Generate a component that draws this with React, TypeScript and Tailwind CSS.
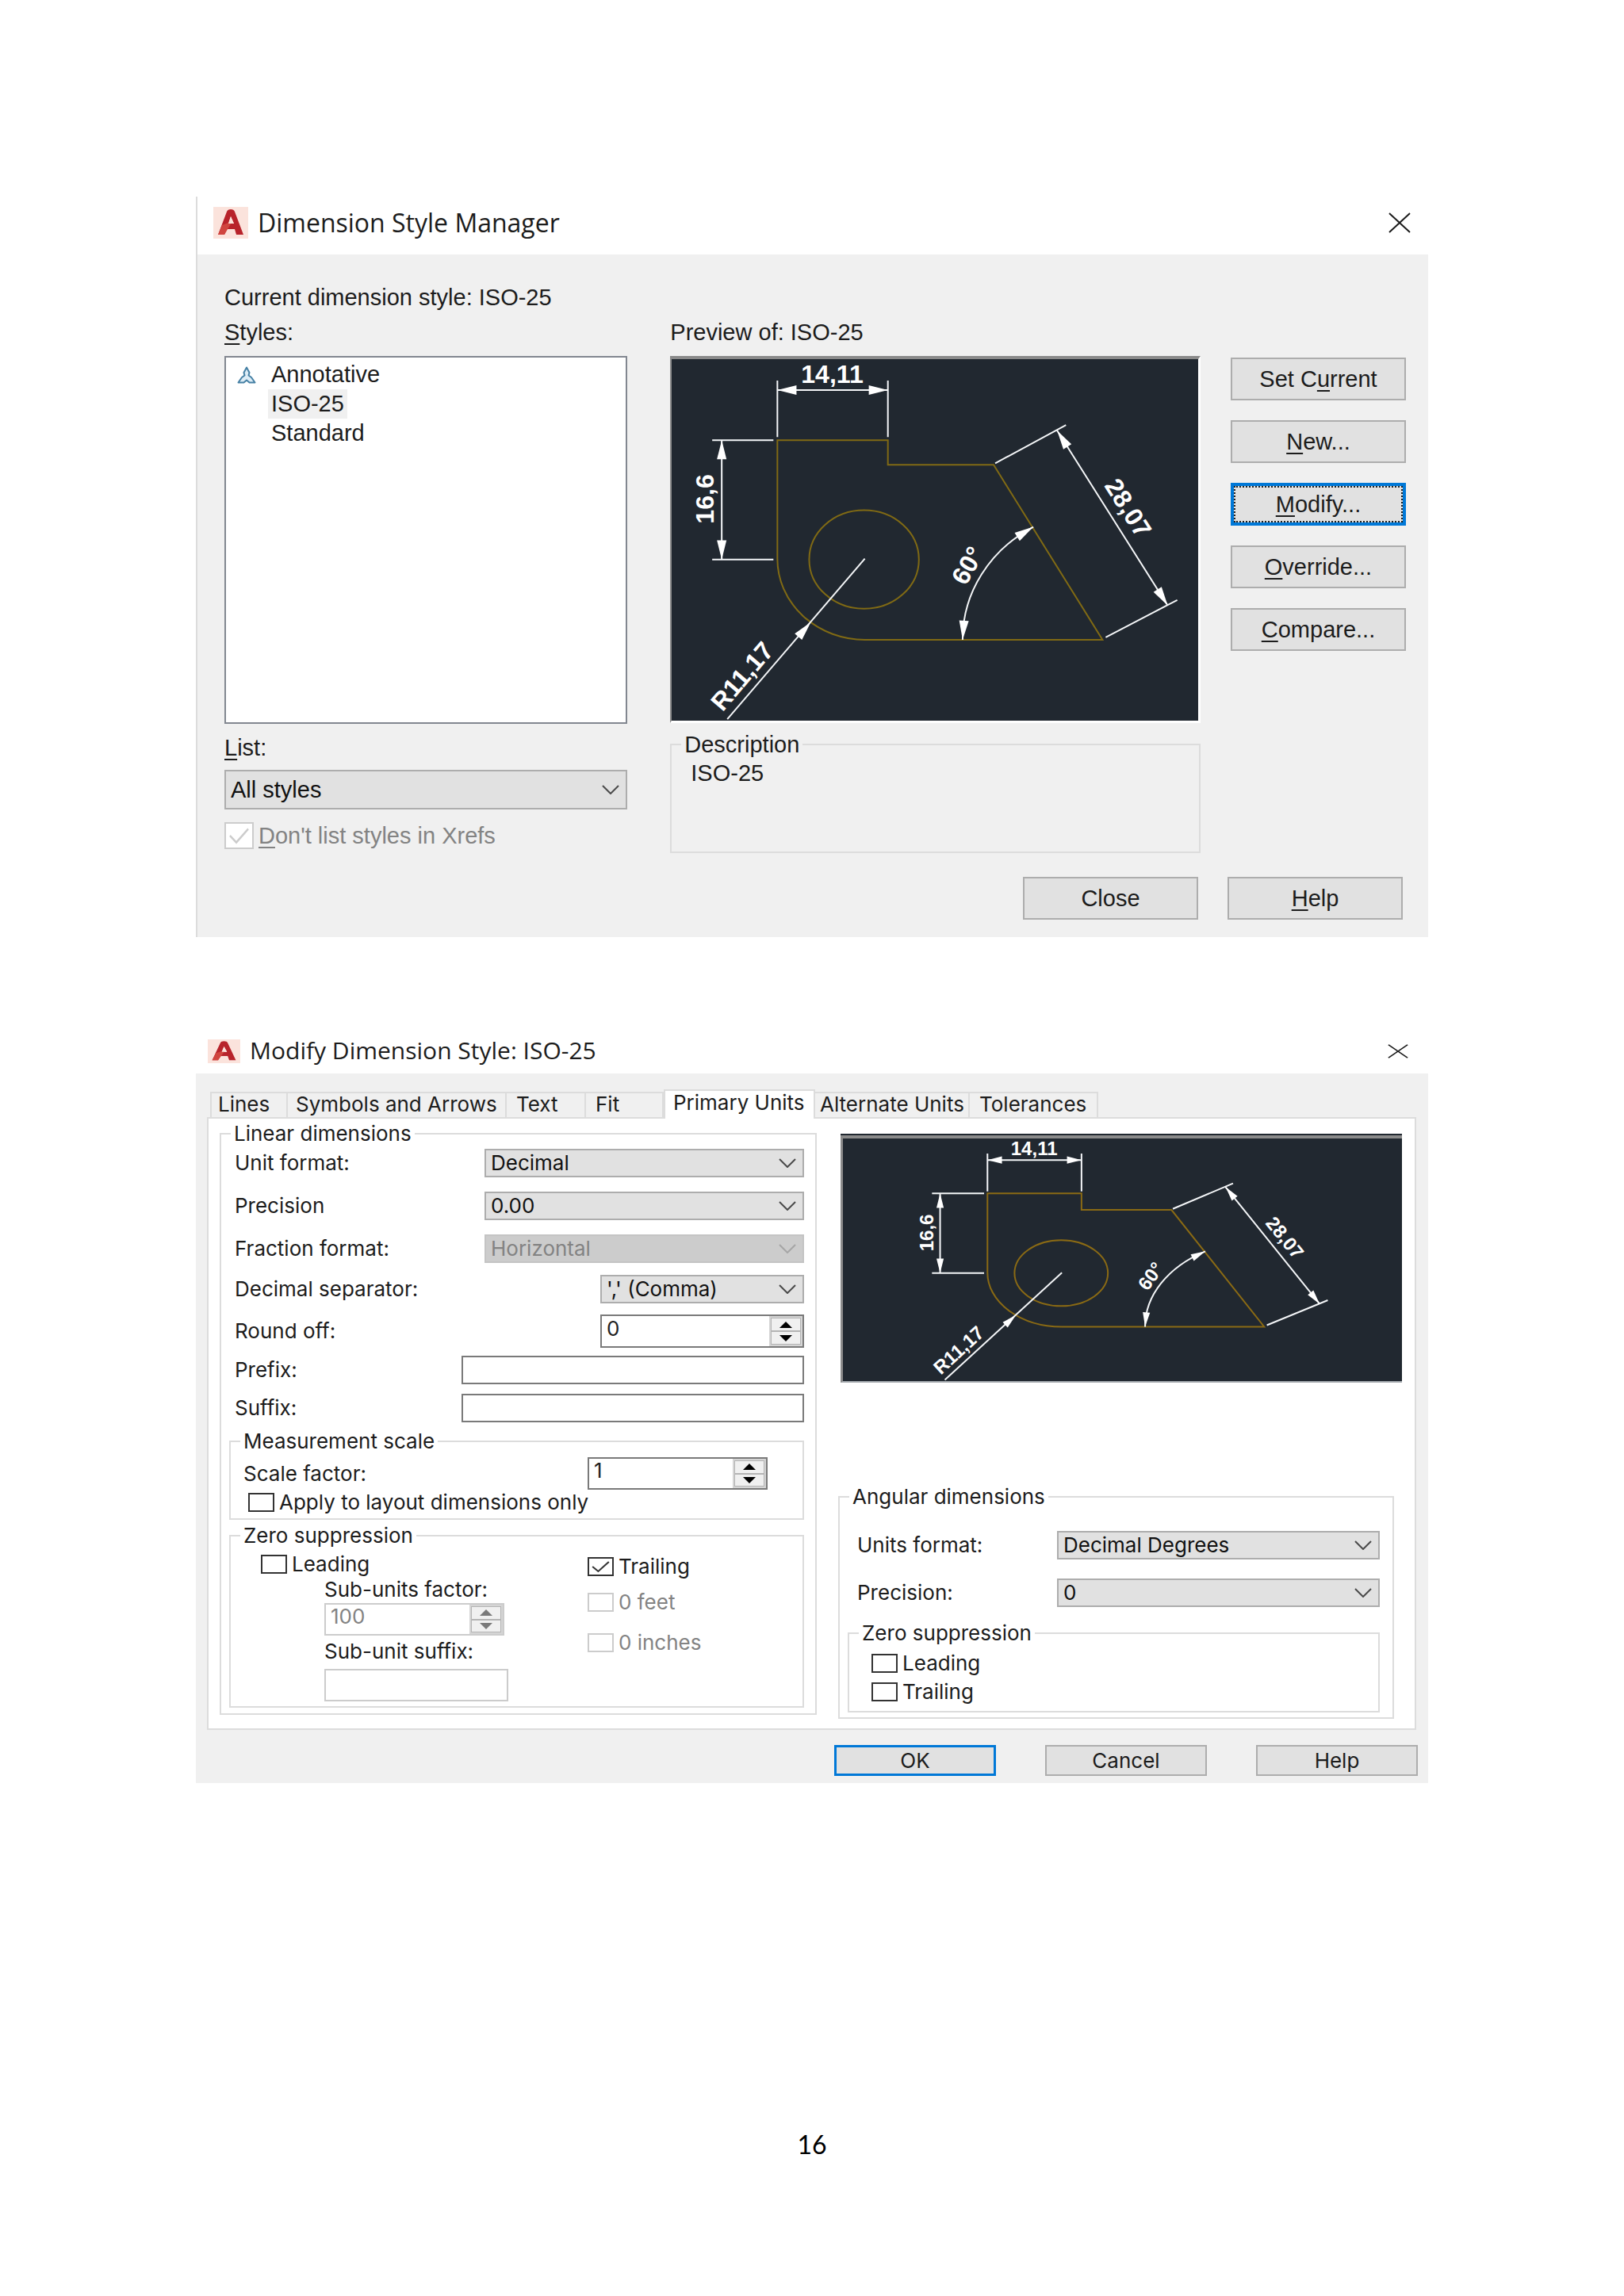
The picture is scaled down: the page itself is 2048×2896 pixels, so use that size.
import React from "react";

const ui = "font-['Liberation_Sans',Arial,sans-serif] text-[29px]";
const wide = "font-[Inter,'Liberation_Sans',sans-serif] text-[26px] leading-6";

function AppIcon({ className }: { className: string }) {
  return (
    <svg viewBox="0 0 44 40" preserveAspectRatio="none" className={className} aria-hidden="true">
      <rect width="44" height="40" fill="#fbe3dc" />
      <path d="M6 35 L17 6 Q18 3 22 3 Q26 3 27 6 L38 35 H29 L27 28 H17 L14 35 Z M19 21 H26 L22 12 Z" fill="#b8232b" fillRule="evenodd" />
      <path d="M6 35 L11 23 L24 18 L14 35 Z" fill="#d0453f" />
      <path d="M19 21 H26 L22 12 Z" fill="#fbe3dc" />
    </svg>
  );
}

function CloseGlyph({ className }: { className: string }) {
  return (
    <svg viewBox="0 0 28 26" preserveAspectRatio="none" className={className} aria-hidden="true">
      <path d="M1 1 L27 25 M27 1 L1 25" stroke="#1a1a1a" strokeWidth="2" fill="none" />
    </svg>
  );
}

type Pt = [number, number];

function arrow(tip: Pt, from: Pt, len: number, half: number) {
  const dx = from[0] - tip[0];
  const dy = from[1] - tip[1];
  const d = Math.hypot(dx, dy);
  const ux = dx / d;
  const uy = dy / d;
  const bx = tip[0] + ux * len;
  const by = tip[1] + uy * len;
  return `${tip[0]},${tip[1]} ${bx - uy * half},${by + ux * half} ${bx + uy * half},${by - ux * half}`;
}

interface DrawingProps {
  width: number;
  height: number;
  sx: number;
  sy: number;
  ox: number;
  oy: number;
  font: number;
  line: string;
}

/* Sample part used to preview a dimension style. */
function Drawing({ width, height, sx, sy, ox, oy, font, line }: DrawingProps) {
  const p = (x: number, y: number): Pt => [ox + x * sx, oy + y * sy];
  const s = (x: number, y: number) => p(x, y).join(" ");
  const len = 24 * ((sx + sy) / 2);
  const half = 6 * ((sx + sy) / 2);
  const heads: [Pt, Pt][] = [
    [p(135, 42), p(274, 42)],
    [p(274, 42), p(135, 42)],
    [p(65, 105), p(65, 255)],
    [p(65, 255), p(65, 105)],
    [p(487, 93), p(626, 313)],
    [p(626, 313), p(487, 93)],
    [p(177, 334), p(72, 456)],
    [p(457, 214), p(436, 227)],
    [p(368, 356), p(370, 328)],
  ];
  const deg = (a: Pt, b: Pt) => (Math.atan2(b[1] - a[1], b[0] - a[0]) * 180) / Math.PI;
  const labels: [string, Pt, number][] = [
    ["14,11", p(204, 33), 0],
    ["16,6", p(55, 179), -90],
    ["28,07", p(567, 196), deg(p(487, 93), p(626, 313))],
    ["60°", p(384, 268), deg(p(372, 310), p(400, 260))],
    ["R11,17", p(99, 409), deg(p(72, 456), p(245, 254))],
  ];
  const c = p(244, 255);
  return (
    <svg viewBox={`0 0 ${width} ${height}`} className="block w-full overflow-visible bg-[#212830]" role="img" aria-label="Dimension preview">
      <g fill="none" stroke={line} strokeWidth="2">
        <path d={`M${s(135, 105)} L${s(274, 105)} L${s(274, 136)} L${s(407, 136)} L${s(544, 356)} L${s(245, 356)} A${110 * sx} ${102 * sy} 0 0 1 ${s(135, 254)} Z`} />
        <ellipse cx={c[0]} cy={c[1]} rx={69 * sx} ry={62 * sy} />
      </g>
      <g fill="none" stroke="#f4f6f8" strokeWidth="2">
        <path d={`M${s(135, 30)} L${s(135, 101)} M${s(274, 30)} L${s(274, 101)} M${s(135, 42)} L${s(274, 42)}`} />
        <path d={`M${s(53, 105)} L${s(130, 105)} M${s(53, 255)} L${s(130, 255)} M${s(65, 105)} L${s(65, 255)}`} />
        <path d={`M${s(409, 134)} L${s(498, 86)} M${s(548, 353)} L${s(638, 306)} M${s(487, 93)} L${s(626, 313)}`} />
        <path d={`M${s(245, 254)} L${s(72, 456)}`} />
        <path d={`M${s(368, 356)} A${176 * sx} ${163 * sy} 0 0 1 ${s(457, 214)}`} />
      </g>
      <g fill="#ffffff">
        {heads.map(([tip, from], i) => (
          <polygon key={i} points={arrow(tip, from, len, half)} />
        ))}
        {labels.map(([text, at, angle]) => (
          <text
            key={text}
            x={at[0]}
            y={at[1]}
            transform={`rotate(${angle} ${at[0]} ${at[1]})`}
            textAnchor="middle"
            fontFamily="Liberation Sans, Arial, sans-serif"
            fontWeight="700"
            fontSize={font}
          >
            {text}
          </text>
        ))}
      </g>
    </svg>
  );
}

function Select({ id, value, className, disabled }: { id: string; value: string; className: string; disabled?: boolean }) {
  return (
    <div className={`relative ${className}`}>
      <select
        id={id}
        disabled={disabled}
        defaultValue={value}
        className="block h-full w-full appearance-none border-2 border-[#adadad] bg-[#e1e1e1] pl-1.5 pr-12 leading-8 text-[#111] disabled:border-[#c4c4c4] disabled:bg-[#cccccc] disabled:text-[#838383] disabled:opacity-100"
      >
        <option>{value}</option>
      </select>
      <svg viewBox="0 0 22 12" className="pointer-events-none absolute top-1/2 right-2.5 w-[22px] -translate-y-1/2" aria-hidden="true">
        <path d="M1 1 L11 11 L21 1" fill="none" stroke={disabled ? "#a6a6a6" : "#4a4a4a"} strokeWidth="2" />
      </svg>
    </div>
  );
}

function Check({
  label,
  checked,
  disabled,
  className = "",
  box = "h-6 w-[33px]",
}: {
  label: React.ReactNode;
  checked?: boolean;
  disabled?: boolean;
  className?: string;
  box?: string;
}) {
  return (
    <label className={`flex items-center gap-1.5 whitespace-nowrap ${disabled ? "text-[#838383]" : ""} ${className}`}>
      <span className={`relative block shrink-0 ${box}`}>
        <input
          type="checkbox"
          defaultChecked={checked}
          disabled={disabled}
          className="peer block h-full w-full appearance-none border-2 border-[#333] bg-white disabled:border-[#cccccc]"
        />
        <svg viewBox="0 0 32 24" preserveAspectRatio="none" className="pointer-events-none absolute inset-0 hidden h-full w-full peer-checked:block" aria-hidden="true">
          <path d="M6 12 L13 18 L26 6" fill="none" stroke={disabled ? "#cccccc" : "#333333"} strokeWidth="2" />
        </svg>
      </span>
      {label}
    </label>
  );
}

function Spinner({ id, value, className, disabled }: { id: string; value: string; className: string; disabled?: boolean }) {
  const tint = disabled ? "#7a7a7a" : "#000000";
  const button = "flex flex-1 items-center justify-center border border-[#b4b4b4] bg-[#f0f0f0]";
  return (
    <div className={`flex border-2 bg-white ${disabled ? "border-[#cccccc]" : "border-[#7a7a7a]"} ${className}`}>
      <input id={id} defaultValue={value} disabled={disabled} className="min-w-0 flex-1 pb-2 pl-1.5 text-[#222] disabled:text-[#838383]" />
      <div className="flex w-[42px] flex-col border-2 border-[#d5d5d5]">
        <button type="button" aria-label="Increase" disabled={disabled} className={button}>
          <svg viewBox="0 0 16 8" className="w-4"><path d="M0 8 L8 0 L16 8 Z" fill={tint} /></svg>
        </button>
        <button type="button" aria-label="Decrease" disabled={disabled} className={button}>
          <svg viewBox="0 0 16 8" className="w-4"><path d="M0 0 L8 8 L16 0 Z" fill={tint} /></svg>
        </button>
      </div>
    </div>
  );
}

function Group({
  title,
  className = "",
  inner = "",
  children,
}: {
  title: string;
  className?: string;
  inner?: string;
  children: React.ReactNode;
}) {
  return (
    <fieldset className={`min-w-0 border-2 border-[#dcdcdc] ${className}`}>
      <legend className="ml-3 px-1 whitespace-nowrap">{title}</legend>
      <div className={inner}>{children}</div>
    </fieldset>
  );
}

function Button({ children, className = "" }: { children: React.ReactNode; className?: string }) {
  return (
    <button type="button" className={`border-2 border-[#adadad] bg-[#e1e1e1] text-center whitespace-nowrap ${className}`}>
      {children}
    </button>
  );
}

function Key({ children }: { children: React.ReactNode }) {
  return <span className="underline decoration-2 underline-offset-4">{children}</span>;
}

function StyleManager() {
  const side = "h-[54px] w-full";
  return (
    <section className={`border-l-2 border-[#dcdcdc] bg-[#f0f0f0] text-[#1c1c1c] ${ui}`}>
      <header className="flex h-[73px] items-center bg-white pr-[22px] pb-2 pl-5">
        <AppIcon className="h-10 w-11" />
        <h1 className="ml-3 flex-1 font-['Open_Sans','Noto_Sans',sans-serif] text-[32px] leading-10">Dimension Style Manager</h1>
        <button type="button" aria-label="Close window"><CloseGlyph className="h-[26px] w-7" /></button>
      </header>
      <div className="pt-8 pr-7 pb-[22px] pl-[34px] leading-[44px]">
        <p>Current dimension style: ISO-25</p>
        <div className="flex">
          <div className="min-w-0 flex-[507]">
            <h2><Key>S</Key>tyles:</h2>
            <ul className="mt-2 h-[464px] border-2 border-[#828790] bg-white pt-[3px] pl-3.5 leading-[37px]">
              <li className="flex items-center">
                <svg viewBox="0 0 24 22" className="mr-[15px] w-6" aria-hidden="true">
                  <path d="M12 1.500 L15.500 8 L14.500 11.500 L18 14 L22.500 20.500 H15.500 L12 17.500 L8.500 20.500 H1.500 L6 14 L9.500 11.500 L8.500 8 Z" fill="#dcecf6" stroke="#4580a4" strokeWidth="2" strokeLinejoin="round" />
                </svg>
                <span className="px-1">Annotative</span>
              </li>
              <li className="pl-[39px]"><span className="inline-block bg-[#f0f0f0] px-1">ISO-25</span></li>
              <li className="pl-[39px]"><span className="px-1">Standard</span></li>
            </ul>
            <label htmlFor="list" className="mt-2 block"><Key>L</Key>ist:</label>
            <Select id="list" value="All styles" className="mt-1.5 h-[50px]" />
            <Check
              className="mt-4 leading-[34px]"
              box="h-[34px] w-[37px]"
              checked
              disabled
              label={<span><Key>D</Key>on't list styles in Xrefs</span>}
            />
          </div>
          <div className="ml-[54px] min-w-0 flex-[667]">
            <h2>Preview of: ISO-25</h2>
            <div className="mt-2 border-t-4 border-r-3 border-b-3 border-l-2 border-t-[#8a8a8a] border-r-white border-b-white border-l-[#8a8a8a]">
              <Drawing width={662} height={455} sx={1} sy={1} ox={-2} oy={-3} font={32} line="#806a14" />
            </div>
            <Group title="Description" className="mt-3 h-[152px] leading-[30px]" inner="pt-1.5 pl-6">
              <p>ISO-25</p>
            </Group>
          </div>
          <div className="ml-[38px] flex w-[221px] flex-col gap-[25px] pt-[54px] leading-8">
            <Button className={side}>Set C<Key>u</Key>rrent</Button>
            <Button className={side}><Key>N</Key>ew...</Button>
            <button type="button" className={`border-4 border-[#0078d7] bg-[#e1e1e1] ${side}`}>
              <span className="flex h-full items-center justify-center border-2 border-dotted border-[#222]"><span><Key>M</Key>odify...</span></span>
            </button>
            <Button className={side}><Key>O</Key>verride...</Button>
            <Button className={side}><Key>C</Key>ompare...</Button>
          </div>
        </div>
        <div className="mt-[30px] mr-1 flex justify-end gap-[37px] leading-8">
          <Button className="h-[54px] w-[221px]">Close</Button>
          <Button className="h-[54px] w-[221px]"><Key>H</Key>elp</Button>
        </div>
      </div>
    </section>
  );
}

function Row({ id, label, children, className = "" }: { id: string; label: string; children: React.ReactNode; className?: string }) {
  return (
    <div className={`flex items-center justify-between ${className}`}>
      <label htmlFor={id} className="whitespace-nowrap">{label}</label>
      {children}
    </div>
  );
}

const tabs: [string, string][] = [
  ["Lines", "w-[98px] pl-2"],
  ["Symbols and Arrows", "w-[276px] pl-2.5"],
  ["Text", "w-[100px] pl-3"],
  ["Fit", "w-[98px] pl-3"],
  ["Primary Units", "w-[191px] pl-2.5"],
  ["Alternate Units", "w-[195px] pl-1.5"],
  ["Tolerances", "w-[162px] pl-3"],
];

function ModifyStyle() {
  const field = "border-2 border-[#7a7a7a] bg-white disabled:border-[#cccccc]";
  return (
    <section className={`mt-[115px] text-[#1c1c1c] ${wide}`}>
      <header className="flex h-[57px] items-center bg-white pr-[25px] pl-[15px]">
        <AppIcon className="h-[30px] w-[41px]" />
        <h1 className="ml-3 flex-1 pb-0.5 font-['Open_Sans','Noto_Sans',sans-serif] text-[30px] leading-8">Modify Dimension Style: ISO-25</h1>
        <button type="button" aria-label="Close window"><CloseGlyph className="h-[18px] w-[26px]" /></button>
      </header>
      <div className="bg-[#f0f0f0] pt-5 pr-[13px] pb-[9px] pl-[14px]">
        <div role="tablist" className="flex items-end pl-1">
          {tabs.map(([name, size]) =>
            name === "Primary Units" ? (
              <button key={name} type="button" role="tab" aria-selected="true" className={`relative -mb-0.5 h-[37px] border-2 border-b-0 border-[#dcdcdc] bg-white pb-1.5 text-left whitespace-nowrap ${size}`}>
                {name}
              </button>
            ) : (
              <button key={name} type="button" role="tab" aria-selected="false" className={`h-8 border-t-2 border-r-2 border-[#dcdcdc] pb-0.5 text-left whitespace-nowrap first:border-l-2 ${size}`}>
                {name}
              </button>
            ),
          )}
        </div>
        <div className="mr-0.5 grid grid-cols-[minmax(0,752fr)_minmax(0,710fr)] gap-x-[27px] border-2 border-[#dcdcdc] bg-white pt-[7px] pr-4 pb-3 pl-3.5">
          <Group title="Linear dimensions" className="mb-[5px]" inner="pt-[7px] pr-3.5 pb-[7px] pl-2.5">
            <div className="pl-[7px]">
              <Row id="unit" label="Unit format:"><Select id="unit" value="Decimal" className="h-9 w-[403px]" /></Row>
              <Row id="prec" label="Precision" className="mt-[18px]"><Select id="prec" value="0.00" className="h-9 w-[403px]" /></Row>
              <Row id="frac" label="Fraction format:" className="mt-[18px]"><Select id="frac" value="Horizontal" disabled className="h-9 w-[403px]" /></Row>
              <Row id="sep" label="Decimal separator:" className="mt-[15px]"><Select id="sep" value="',' (Comma)" className="h-9 w-[257px]" /></Row>
              <Row id="round" label="Round off:" className="mt-3.5"><Spinner id="round" value="0" className="h-[42px] w-[257px]" /></Row>
              <Row id="prefix" label="Prefix:" className="mt-2.5"><input id="prefix" className={`h-9 w-[432px] ${field}`} /></Row>
              <Row id="suffix" label="Suffix:" className="mt-3"><input id="suffix" className={`h-9 w-[432px] ${field}`} /></Row>
            </div>
            <Group title="Measurement scale" className="mt-3" inner="pt-2 pb-2 pl-4">
              <Row id="scale" label="Scale factor:" className="pr-11"><Spinner id="scale" value="1" className="h-[41px] w-[227px]" /></Row>
              <Check label="Apply to layout dimensions only" className="mt-1 ml-1.5" />
            </Group>
            <Group title="Zero suppression" className="mt-2" inner="flex pb-[6px]">
              <div className="w-[450px] pt-3 pl-[38px]">
                <Check label="Leading" />
                <div className="pl-20">
                  <label htmlFor="subf" className="mt-2 block">Sub-units factor:</label>
                  <Spinner id="subf" value="100" disabled className="mt-[5px] h-[41px] w-[227px]" />
                  <label htmlFor="subs" className="mt-2 block">Sub-unit suffix:</label>
                  <input id="subs" disabled className={`mt-2.5 block h-[41px] w-[232px] ${field}`} />
                </div>
              </div>
              <div className="pt-[15px]">
                <Check label="Trailing" checked />
                <Check label="0 feet" disabled className="mt-[21px]" />
                <Check label="0 inches" disabled className="mt-[27px]" />
              </div>
            </Group>
          </Group>
          <div className="flex min-w-0 flex-col">
            <div className="mt-3 ml-[3px] border-t-2 border-[#212830]">
              <div className="border-t-4 border-b-2 border-l-3 border-t-[#8a8a8a] border-b-[#a8adb2] border-l-[#8a8a8a]">
                <Drawing width={704} height={305} sx={0.852} sy={0.669} ox={67} oy={-1} font={24} line="#8a6a14" />
              </div>
            </div>
            <Group title="Angular dimensions" className="mt-auto mr-2.5" inner="pt-[31px] pr-4 pb-1.5 pl-2.5">
              <Row id="ang" label="Units format:" className="pl-3"><Select id="ang" value="Decimal Degrees" className="h-9 w-[407px]" /></Row>
              <Row id="angp" label="Precision:" className="mt-6 pl-3"><Select id="angp" value="0" className="h-9 w-[407px]" /></Row>
              <Group title="Zero suppression" className="mt-[21px]" inner="pt-3.5 pb-3 pl-7">
                <Check label="Leading" />
                <Check label="Trailing" className="mt-3" />
              </Group>
            </Group>
          </div>
        </div>
        <div className="mt-[19px] flex justify-end gap-[62px]">
          <button type="button" className="h-[39px] w-[204px] border-3 border-[#0078d7] bg-[#e1e1e1]">OK</button>
          <Button className="h-[39px] w-[204px]">Cancel</Button>
          <Button className="h-[39px] w-[204px]">Help</Button>
        </div>
      </div>
    </section>
  );
}

export default function App() {
  return (
    <main className="bg-white px-[247px] pt-[248px] pb-[169px]">
      <StyleManager />
      <ModifyStyle />
      <footer className="mt-[436px] text-center font-[Lato,'Open_Sans',sans-serif] text-[32px] leading-10 text-black">16</footer>
    </main>
  );
}
